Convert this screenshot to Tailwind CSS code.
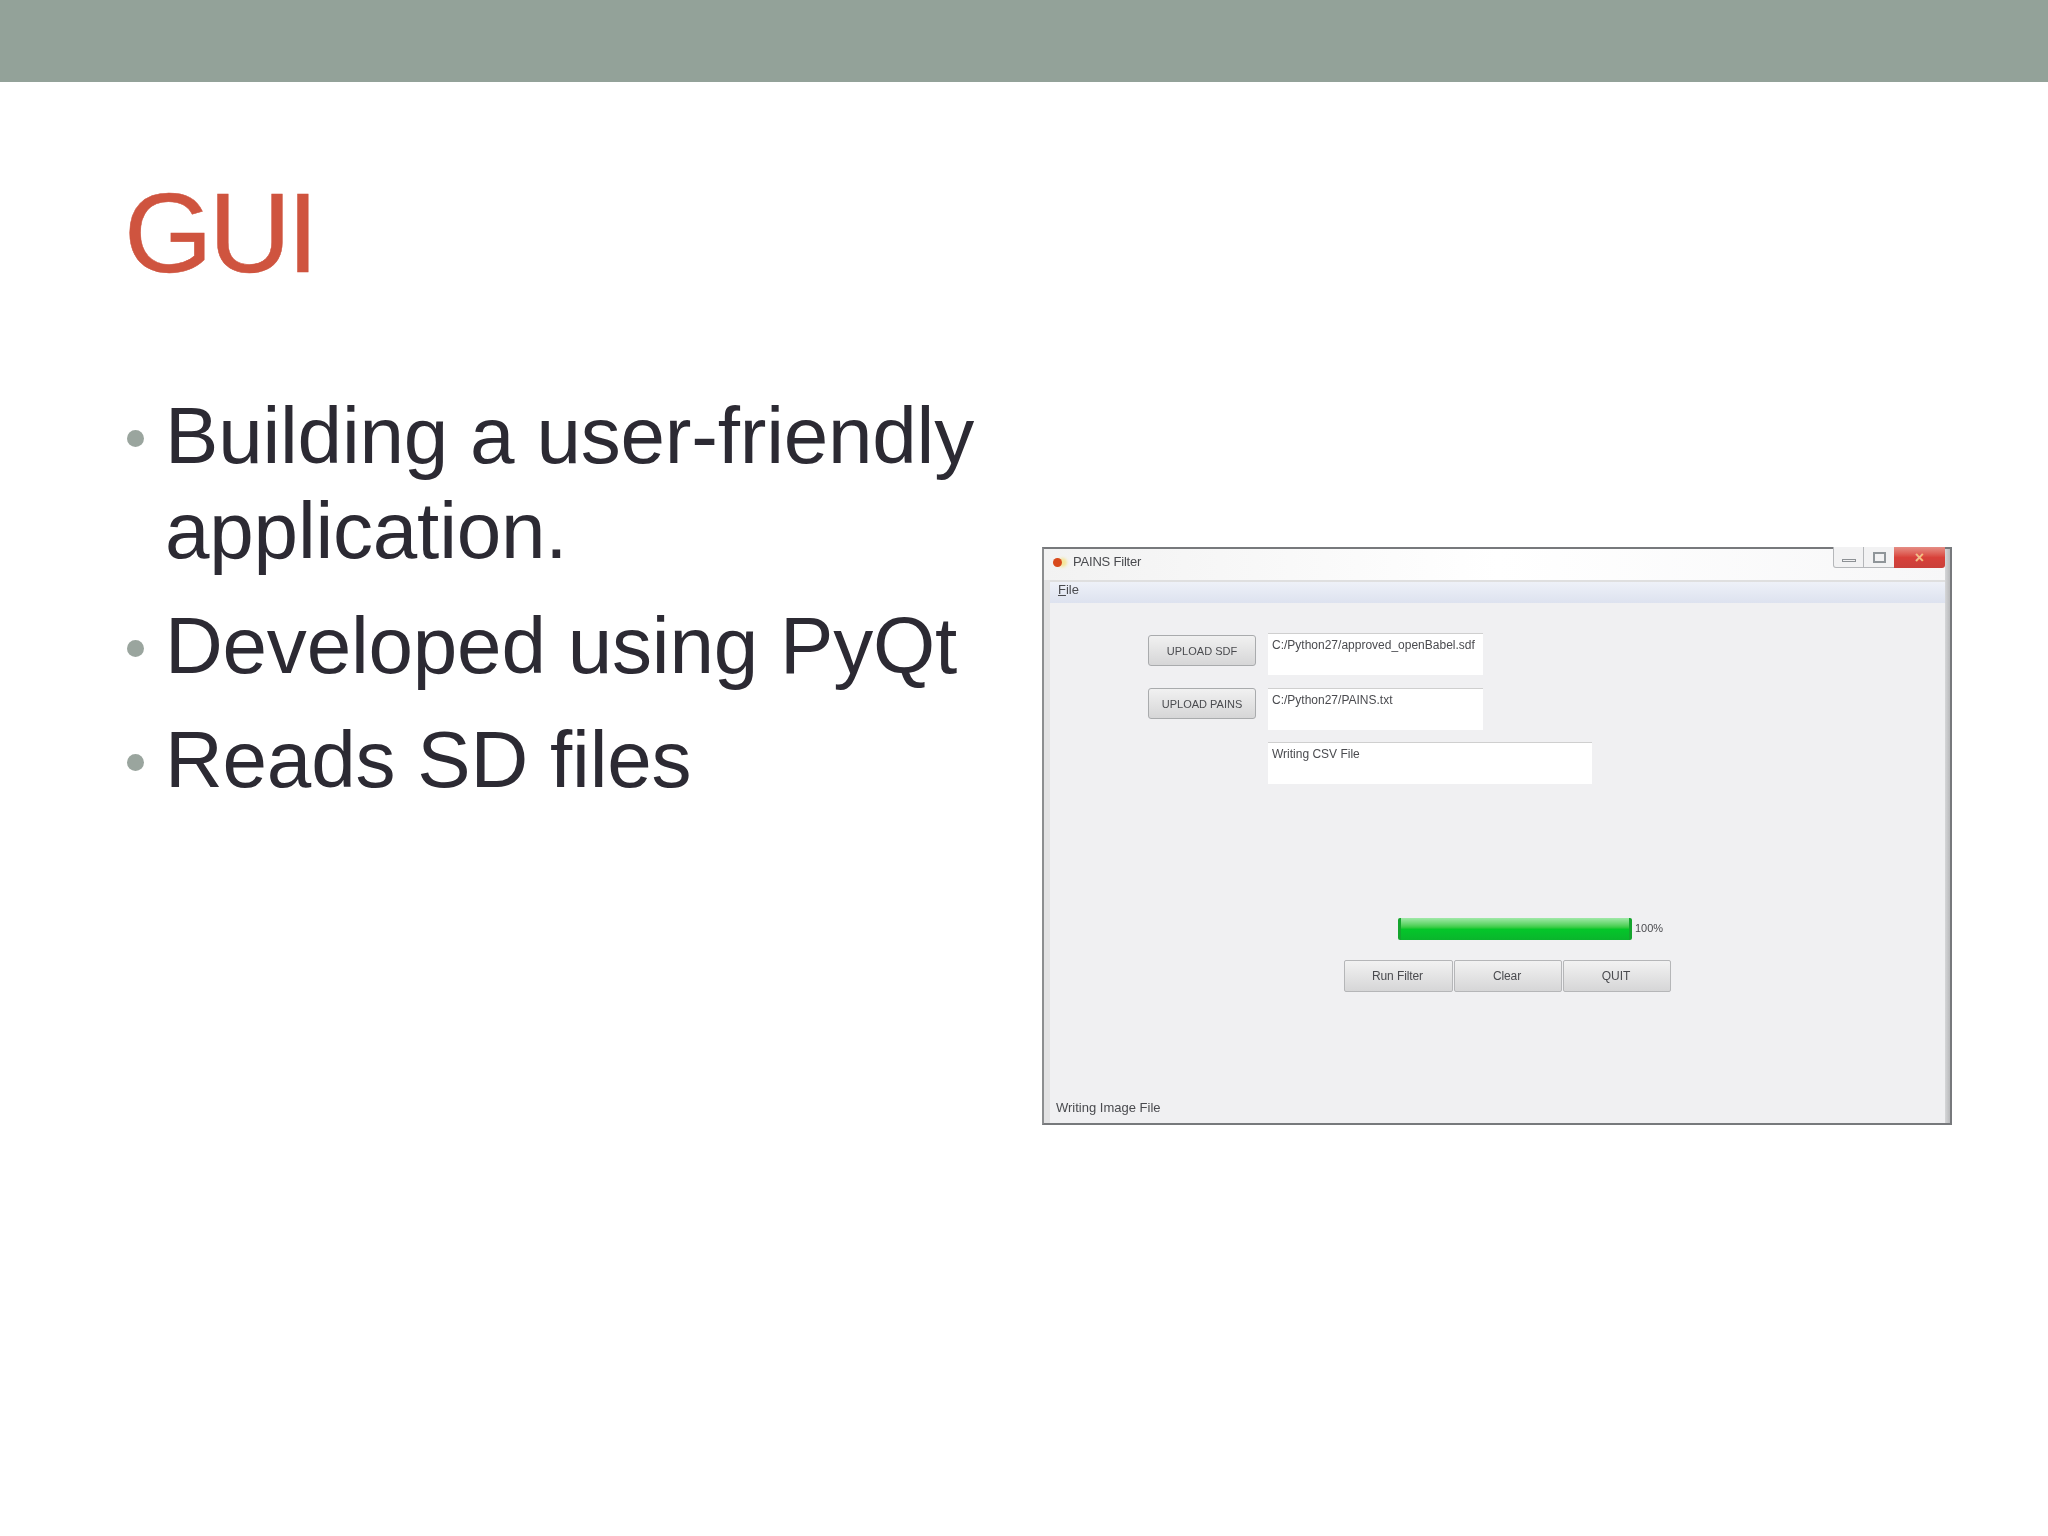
<!doctype html>
<html lang="en">

<head>
  <meta charset="utf-8">
  <title>GUI</title>
  <script src="https://cdn.jsdelivr.net/npm/@tailwindcss/browser@4"></script>
</head>

<body class="w-[2048px] h-[1536px] bg-white overflow-hidden font-['Liberation_Sans',Arial,sans-serif]">
  <div class="h-[82px] bg-[#93a299]"></div>

  <div class="flex">
    <!-- left: title and bullets -->
    <div class="w-[1042px] shrink-0 pl-[124px]">
      <h1 class="pt-[94px] text-[114px] leading-[114px] tracking-[-4px] text-[#cf543f] [-webkit-text-stroke:0.5px_#cf543f]">GUI</h1>
      <ul class="mt-[98px] text-[80px] leading-[95px] tracking-[-0.2px] text-[#2c2a33]">
        <li class="flex">
          <span class="w-[17px] h-[17px] mt-[42px] ml-[3px] mr-[21px] rounded-full bg-[#9aa59e] shrink-0"></span>
          <span>Building a user-friendly<br>application.</span>
        </li>
        <li class="flex mt-[20px]">
          <span class="w-[17px] h-[17px] mt-[42px] ml-[3px] mr-[21px] rounded-full bg-[#9aa59e] shrink-0"></span>
          <span>Developed using PyQt</span>
        </li>
        <li class="flex mt-[19px]">
          <span class="w-[17px] h-[17px] mt-[42px] ml-[3px] mr-[21px] rounded-full bg-[#9aa59e] shrink-0"></span>
          <span>Reads SD files</span>
        </li>
      </ul>
    </div>

    <!-- right: screenshot of the filter window -->
    <div class="mt-[465px] relative w-[910px] h-[578px] flex flex-col bg-[#e2e2e3] border-t-2 border-l-2 border-b-2 border-t-[#77797c] border-b-[#77797c] border-l-[#8c8e90] text-[#4a4b4f] text-[13px] leading-[16px]">
      <div class="h-[31px] shrink-0 flex items-start pt-[5px] pl-[9px] bg-gradient-to-r from-[#f2f2f2] via-white to-[#f7f7f8]">
        <span class="mt-[4px] w-[9px] h-[9px] rounded-full bg-[#d8491c] shadow-[5px_0_3px_#f5e69a] blur-[0.5px]"></span>
        <span class="ml-[11px] tracking-[-0.2px] blur-[0.6px]">PAINS Filter</span>
        <div class="ml-auto mr-[7px] -mt-[7px] flex h-[21px]">
          <div class="w-[31px] flex items-end justify-center pb-[5px] border border-t-0 border-[#b5b7ba] rounded-bl-[3px] bg-[#f2f2f3]">
            <span class="w-[14px] h-[3px] border border-[#8d9195]"></span>
          </div>
          <div class="w-[30px] flex items-center justify-center border-b border-[#b5b7ba] bg-[#f2f2f3]">
            <span class="w-[13px] h-[11px] border-2 border-[#8f9599] blur-[0.4px]"></span>
          </div>
          <div class="w-[51px] flex items-center justify-center rounded-br-[3px] bg-gradient-to-b from-[#e58d85] via-[#d8413a] to-[#c9403a] text-[#f4c08a] text-[16px] font-bold">×</div>
        </div>
      </div>

      <div class="grow flex flex-col ml-[6px] mr-[6px] border-t-2 border-[#dfdfdf] bg-[#f0f0f2]">
        <div class="h-[21px] shrink-0 flex items-start pl-[8px] bg-gradient-to-b from-[#eef1f8] to-[#dde2ef]">
          <span class="blur-[0.6px]"><span class="underline">F</span>ile</span>
        </div>

        <div class="grow flex flex-col pl-[98px]">
          <div class="mt-[30px] flex items-start gap-[12px]">
            <div class="mt-[2px] w-[108px] h-[31px] flex items-center justify-center rounded-[3px] border border-[#a9abad] bg-gradient-to-b from-[#f1f1f1] to-[#d6d6d7] text-[11px] blur-[0.6px]">UPLOAD SDF</div>
            <div class="w-[215px] h-[42px] border-t border-[#cfcfcf] bg-white pl-[4px] pt-[3px] text-[12px]"><span class="blur-[0.6px] block">C:/Python27/approved_openBabel.sdf</span></div>
          </div>
          <div class="mt-[13px] flex items-start gap-[12px]">
            <div class="w-[108px] h-[31px] flex items-center justify-center rounded-[3px] border border-[#a9abad] bg-gradient-to-b from-[#f1f1f1] to-[#d6d6d7] text-[11px] blur-[0.6px]">UPLOAD PAINS</div>
            <div class="w-[215px] h-[42px] border-t border-[#cfcfcf] bg-white pl-[4px] pt-[3px] text-[12px]"><span class="blur-[0.6px] block">C:/Python27/PAINS.txt</span></div>
          </div>
          <div class="mt-[12px] ml-[120px] w-[324px] h-[42px] border-t border-[#cfcfcf] bg-white pl-[4px] pt-[3px] text-[12px]"><span class="blur-[0.6px] block">Writing CSV File</span></div>

          <div class="mt-[134px] ml-[250px] flex items-center gap-[3px]">
            <div class="w-[234px] h-[22px] rounded-[2px] bg-gradient-to-b from-[#9fe8a8] via-[#04c72a] to-[#0ab52c] border-l-3 border-r-3 border-[#15a52e] blur-[0.4px]"></div>
            <span class="-mt-[2px] text-[11px] blur-[0.6px]">100%</span>
          </div>

          <div class="mt-[20px] ml-[196px] flex gap-[1px] text-[12px] tracking-[-0.1px]">
            <div class="w-[109px] h-[32px] flex items-center justify-center pr-[2px] border border-[#b5b6b8] rounded-[2px] bg-gradient-to-b from-[#f2f2f2] to-[#d6d6d7]"><span class="blur-[0.6px]">Run Filter</span></div>
            <div class="w-[108px] h-[32px] flex items-center justify-center pr-[2px] border border-[#b5b6b8] rounded-[2px] bg-gradient-to-b from-[#f2f2f2] to-[#d6d6d7]"><span class="blur-[0.6px]">Clear</span></div>
            <div class="w-[108px] h-[32px] flex items-center justify-center pr-[2px] border border-[#b5b6b8] rounded-[2px] bg-gradient-to-b from-[#f2f2f2] to-[#d6d6d7]"><span class="blur-[0.6px]">QUIT</span></div>
          </div>
        </div>

        <div class="pb-[7px] pl-[6px] text-[13px] blur-[0.6px]">Writing Image File</div>
      </div>
      <div class="absolute top-0 bottom-0 right-0 w-[7px] bg-gradient-to-r from-[#d5d6d8] to-[#b9babc] border-r-2 border-[#77797c]"></div>
    </div>
  </div>
</body>

</html>
